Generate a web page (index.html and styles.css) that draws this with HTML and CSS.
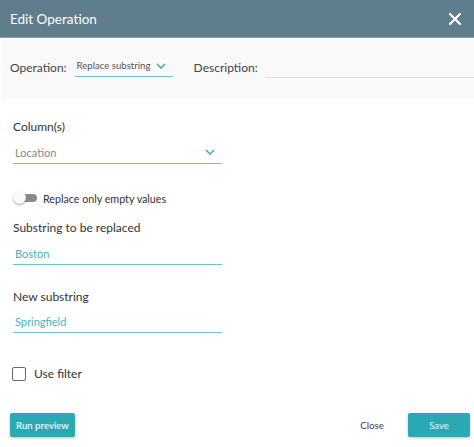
FILE: index.html
```html
<!DOCTYPE html>
<html>
<head>
<meta charset="utf-8">
<link rel="stylesheet" href="styles.css">
</head>
<body>
<div class="dialog">
  <div class="header">
    <span class="title">Edit Operation</span>
    <svg class="close-x" width="12" height="12" viewBox="0 0 12 12"><path d="M1 1L11 11M11 1L1 11" stroke="#fff" stroke-width="2.2" stroke-linecap="square"/></svg>
  </div>
  <div class="band">
    <span class="band-label">Operation:</span>
    <div class="op-select">
      <span>Replace substring</span>
      <svg width="10" height="6" viewBox="0 0 10 6"><path d="M1 1L5 5L9 1" fill="none" stroke="#3fb0b9" stroke-width="1.6"/></svg>
    </div>
    <span class="band-label desc-label">Description:</span>
    <div class="desc-input"></div>
  </div>
  <div class="body">
    <div class="label first">Column(s)</div>
    <div class="field select">
      <span class="grey">Location</span>
      <svg width="10" height="6" viewBox="0 0 10 6"><path d="M1 1L5 5L9 1" fill="none" stroke="#3fb0b9" stroke-width="1.6"/></svg>
    </div>
    <div class="toggle-row">
      <span class="toggle"><span class="track"></span><span class="knob"></span></span>
      <span class="small">Replace only empty values</span>
    </div>
    <div class="label mid">Substring to be replaced</div>
    <div class="field"><span class="teal">Boston</span></div>
    <div class="label gap">New substring</div>
    <div class="field"><span class="teal">Springfield</span></div>
    <div class="check-row">
      <span class="checkbox"></span>
      <span class="check-label">Use filter</span>
    </div>
  </div>
  <div class="footer">
    <button class="btn">Run preview</button>
    <div class="spacer"></div>
    <button class="link">Close</button>
    <button class="btn save">Save</button>
  </div>
</div>
</body>
</html>
```

FILE: styles.css
```css
html, body {
  margin: 0;
  padding: 0;
  background: #fff;
}
body {
  font-family: Lato, "Open Sans", sans-serif;
  color: #333;
}
.dialog {
  width: 474px;
  height: 447px;
  display: flex;
  flex-direction: column;
}
.header {
  background: #607d8b;
  display: flex;
  align-items: center;
  justify-content: space-between;
  padding: 0 13px 0 10px;
  border-bottom: 1px solid #8da3ad;
  box-sizing: border-box;
  height: 38px;
}
.title {
  color: #fff;
  font-size: 13.5px;
}
.close-x {
  display: block;
}
.band {
  margin-left: 2px;
  height: 61px;
  background: #f9f9f9;
  display: flex;
  align-items: center;
  padding-left: 8px;
  padding-bottom: 3px;
  box-sizing: border-box;
}
.band-label {
  font-size: 12px;
  color: #444;
}
.op-select {
  margin-left: 8px;
  width: 98px;
  height: 20px;
  box-sizing: border-box;
  border-bottom: 1px solid #6cc5cb;
  display: flex;
  align-items: center;
  justify-content: space-between;
  padding: 0 7px 2px 2px;
  font-size: 9.6px;
  color: #555;
}
.desc-label {
  margin-left: 21px;
}
.desc-input {
  margin-left: 7px;
  flex: 1;
  height: 21px;
  border-bottom: 1px solid #e2e2e2;
}
.body {
  padding: 0 0 0 13px;
  flex: 1;
}
.label {
  font-size: 12px;
  color: #333;
  height: 18px;
  line-height: 18px;
}
.label.first {
  margin-top: 19px;
}
.label.mid {
  margin-top: 13px;
}
.label.gap {
  margin-top: 23px;
}
.field {
  width: 209px;
  height: 23px;
  margin-top: 5px;
  box-sizing: border-box;
  border-bottom: 1px solid #6cc5cb;
  display: flex;
  align-items: center;
  justify-content: space-between;
  padding: 0 7px 0 2px;
  font-size: 11px;
}
.field + .label.gap + .field {
  height: 22px;
}
.grey { color: #888; }
.teal { color: #4ab3bb; }
.toggle-row {
  display: flex;
  align-items: center;
  margin-top: 26px;
  height: 16px;
}
.toggle {
  position: relative;
  width: 26px;
  height: 14px;
  display: inline-block;
}
.track {
  position: absolute;
  left: 4px;
  top: 3px;
  width: 20px;
  height: 8px;
  border-radius: 4px;
  background: #8a8a8a;
}
.knob {
  position: absolute;
  left: 0;
  top: 0;
  width: 13px;
  height: 13px;
  border-radius: 50%;
  background: #fafafa;
  box-shadow: 0 1px 2px rgba(0,0,0,0.35);
}
.small {
  margin-left: 4px;
  font-size: 10.7px;
  color: #333;
}
.check-row {
  display: flex;
  align-items: center;
  margin-top: 33px;
}
.checkbox {
  width: 12px;
  height: 12px;
  border: 1.5px solid #666;
  border-radius: 2px;
  margin-left: -1px;
}
.check-label {
  margin-left: 8px;
  font-size: 12px;
  color: #333;
}
.footer {
  display: flex;
  align-items: center;
  padding: 0 4px 10px 10px;
}
.spacer { flex: 1; }
.btn {
  height: 24px;
  width: 65px;
  padding: 0;
  background: #2aa9b4;
  color: #e8f8f9;
  border: none;
  border-radius: 2px;
  font-family: inherit;
  font-size: 9.6px;
  font-weight: 600;
  box-shadow: 0 1px 3px rgba(0,0,0,0.25);
}
.save {
  width: 62px;
  font-weight: 400;
}
.link {
  background: none;
  border: none;
  font-family: inherit;
  font-size: 9.8px;
  color: #444;
  margin-right: 18px;
}
```
